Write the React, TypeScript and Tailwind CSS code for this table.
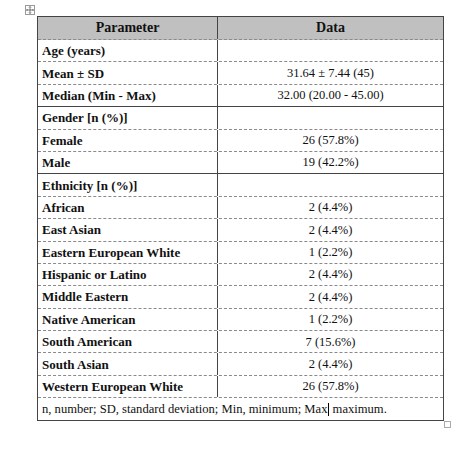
import React from "react";

type Row = { label: string; value?: string; solid?: boolean };

const rows: Row[] = [
  { label: "Age (years)" },
  { label: "Mean ± SD", value: "31.64 ± 7.44 (45)" },
  { label: "Median (Min - Max)", value: "32.00 (20.00 - 45.00)", solid: true },
  { label: "Gender [n (%)]" },
  { label: "Female", value: "26 (57.8%)" },
  { label: "Male", value: "19 (42.2%)", solid: true },
  { label: "Ethnicity [n (%)]" },
  { label: "African", value: "2 (4.4%)" },
  { label: "East Asian", value: "2 (4.4%)" },
  { label: "Eastern European White", value: "1 (2.2%)" },
  { label: "Hispanic or Latino", value: "2 (4.4%)" },
  { label: "Middle Eastern", value: "2 (4.4%)" },
  { label: "Native American", value: "1 (2.2%)" },
  { label: "South American", value: "7 (15.6%)" },
  { label: "South Asian", value: "2 (4.4%)" },
  { label: "Western European White", value: "26 (57.8%)" },
];

export default function App() {
  return (
    <div className="relative w-[474px] h-[450px] bg-white text-[#111] font-['Liberation_Serif',serif] text-[13px]">
      <div className="absolute left-[25px] top-[5px] w-[10px] h-[10px] border border-[#9a9a9a] bg-white flex items-center justify-center">
        <svg width="8" height="8" viewBox="0 0 8 8" fill="none" stroke="#555" strokeWidth="0.8">
          <path d="M4 0.5V7.5M0.5 4H7.5" />
          <path d="M3 1.5L4 0.5L5 1.5M3 6.5L4 7.5L5 6.5M1.5 3L0.5 4L1.5 5M6.5 3L7.5 4L6.5 5" />
        </svg>
      </div>
      <div className="pt-[16px] pl-[37px]">
        <div className="w-[407px] border-[1.5px] border-[#444]">
          <div className="flex h-[23px] bg-[#c0c0c0] border-b border-dashed border-[#8a8a8a] font-bold text-[14px] leading-none">
            <div className="w-[180px] border-r border-[#444] flex items-center justify-center">Parameter</div>
            <div className="flex-1 flex items-center justify-center">Data</div>
          </div>
          {rows.map((r, i) => (
            <div
              key={i}
              className={
                r.solid
                  ? "flex h-[22.4px] border-b border-solid border-[#444] leading-none"
                  : "flex h-[22.4px] border-b border-dashed border-[#8a8a8a] leading-none"
              }
            >
              <div className="w-[180px] border-r border-solid border-[#444] flex items-center pl-[4px] font-bold">
                {r.label}
              </div>
              <div className="flex-1 flex items-center justify-center text-[12.5px]">{r.value ?? ""}</div>
            </div>
          ))}
          <div className="flex h-[22px] items-center pl-[4px] leading-none text-[12.6px]">
            n, number; SD, standard deviation; Min, minimum; Max
            <span className="inline-block w-px h-[13px] bg-black mx-[0.5px]"></span>
            {"\u00a0"}maximum.
          </div>
        </div>
      </div>
      <div className="absolute left-[444px] top-[421px] w-[7px] h-[7px] border border-[#aaa] bg-white"></div>
    </div>
  );
}
